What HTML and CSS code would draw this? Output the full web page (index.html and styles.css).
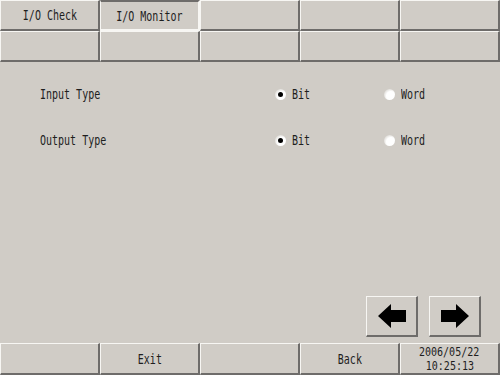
FILE: index.html
```html
<!DOCTYPE html>
<html>
<head>
<meta charset="utf-8">
<link rel="stylesheet" href="styles.css">
</head>
<body>
<div class="screen">
  <div class="tabs">
    <div class="btn"><span class="txt">I/O Check</span></div>
    <div class="btn active"><span class="txt">I/O Monitor</span></div>
    <div class="btn"></div>
    <div class="btn"></div>
    <div class="btn"></div>
    <div class="btn"></div>
    <div class="btn"></div>
    <div class="btn"></div>
    <div class="btn"></div>
    <div class="btn"></div>
  </div>
  <main class="main">
    <div class="settings">
      <div class="label"><span class="txt left">Input Type</span></div>
      <div class="radio"><span class="dot on"></span><span class="txt left">Bit</span></div>
      <div class="radio"><span class="dot"></span><span class="txt left">Word</span></div>
      <div class="label"><span class="txt left">Output Type</span></div>
      <div class="radio"><span class="dot on"></span><span class="txt left">Bit</span></div>
      <div class="radio"><span class="dot"></span><span class="txt left">Word</span></div>
    </div>
    <div class="nav">
      <div class="btn arrow-btn">
        <svg width="28" height="24" viewBox="0 0 28 24"><polygon points="0,12 13,0 13,6 28,6 28,18 13,18 13,24" fill="#000"/></svg>
      </div>
      <div class="btn arrow-btn">
        <svg width="28" height="24" viewBox="0 0 28 24"><polygon points="28,12 15,0 15,6 0,6 0,18 15,18 15,24" fill="#000"/></svg>
      </div>
    </div>
  </main>
  <div class="footer">
    <div class="btn"></div>
    <div class="btn"><span class="txt">Exit</span></div>
    <div class="btn"></div>
    <div class="btn"><span class="txt">Back</span></div>
    <div class="btn clock"><span class="txt small">2006/05/22</span><span class="txt small">10:25:13</span></div>
  </div>
</div>
</body>
</html>
```
FILE: styles.css
```css
* { box-sizing: border-box; }
body {
  margin: 0;
  background: #d0ccc6;
  font-family: "DejaVu Sans Mono", "Liberation Mono", monospace;
  font-size: 14px;
  color: #1e1e1e;
}
.screen {
  width: 500px;
  height: 375px;
  display: flex;
  flex-direction: column;
}
.tabs {
  display: grid;
  grid-template-columns: repeat(5, 100px);
  grid-template-rows: 31px 31px;
}
.btn {
  background: #d0ccc6;
  border-top: 1px solid #f7f6f3;
  border-left: 1px solid #f7f6f3;
  border-right: 2px solid #6e6c6a;
  border-bottom: 2px solid #6e6c6a;
  display: flex;
  align-items: center;
  justify-content: center;
}
.btn.active {
  border-top: 2px solid #6e6c6a;
  border-left: 1px solid #f7f6f3;
  border-right: 2px solid #f7f6f3;
  border-bottom: 2px solid #f7f6f3;
}
.txt {
  display: inline-block;
  white-space: nowrap;
  transform: scaleX(0.714);
}
.txt.left { transform-origin: left center; }
.main {
  flex: 1;
  display: flex;
  flex-direction: column;
}
.settings {
  display: grid;
  grid-template-columns: 235px 109px auto;
  grid-auto-rows: 20px;
  row-gap: 26px;
  padding: 22px 0 0 40px;
  align-items: center;
}
.radio {
  display: flex;
  align-items: center;
  gap: 6px;
}
.dot {
  width: 11px;
  height: 11px;
  border-radius: 50%;
  background: radial-gradient(circle at 62% 62%, #ffffff 45%, #e4e2de 70%, #b9b5af 100%);
  display: flex;
  align-items: center;
  justify-content: center;
}
.dot.on::after {
  content: "";
  width: 5px;
  height: 5px;
  border-radius: 50%;
  background: #000;
}
.nav {
  margin-top: auto;
  display: flex;
  justify-content: flex-end;
  gap: 11px;
  padding: 0 19px 6px 0;
}
.arrow-btn {
  width: 52px;
  height: 41px;
}
.footer {
  display: grid;
  grid-template-columns: repeat(5, 100px);
  height: 32px;
}
.clock {
  flex-direction: column;
  justify-content: center;
}
.txt.small {
  font-size: 12px;
  line-height: 14px;
  height: 14px;
  transform: scaleX(0.835);
}
```
